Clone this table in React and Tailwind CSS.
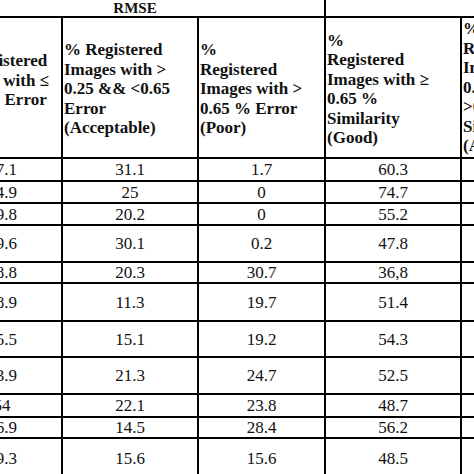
import React from "react";

const rows = [
  ["67.1", "31.1", "1.7", "60.3"],
  ["74.9", "25", "0", "74.7"],
  ["79.8", "20.2", "0", "55.2"],
  ["69.6", "30.1", "0.2", "47.8"],
  ["48.8", "20.3", "30.7", "36,8"],
  ["68.9", "11.3", "19.7", "51.4"],
  ["65.5", "15.1", "19.2", "54.3"],
  ["53.9", "21.3", "24.7", "52.5"],
  ["54", "22.1", "23.8", "48.7"],
  ["56.9", "14.5", "28.4", "56.2"],
  ["69.3", "15.6", "15.6", "48.5"],
];

const Head = ({ lines, className = "" }) => (
  <div className={"bg-white flex items-center pl-px " + className}>
    <div className="font-bold text-[17px] leading-[19.5px] whitespace-nowrap">
      {lines.map((l, i) => (
        <div key={i}>{l}</div>
      ))}
    </div>
  </div>
);

export default function App() {
  return (
    <div
      className="w-[474px] h-[474px] overflow-hidden bg-white text-[#111]"
      style={{ fontFamily: '"Liberation Serif", "Times New Roman", serif' }}
    >
      <div className="grid w-max grid-cols-[61px_134px_125px_134px_140px] grid-rows-[16px_139px_21px_20px_20px_35px_19px_36px_34px_35px_21px_19px_38px] gap-[2px] bg-black">
        {/* group header row */}
        <div className="col-span-3 bg-white flex items-center justify-center pr-[54px] font-bold text-[15px] leading-none">
          RMSE
        </div>
        <div className="col-span-2 bg-white" />

        {/* column headers */}
        <div className="bg-white flex items-center justify-end pb-[14px]">
          <div className="w-[126px] shrink-0 text-center font-bold text-[17px] leading-[19.5px] whitespace-nowrap">
            <div>% Registered</div>
            <div>Images with ≤</div>
            <div>0.25 % Error</div>
          </div>
        </div>
        <Head className="pt-[3px]" lines={["% Registered", "Images with >", "0.25 && <0.65", "Error", "(Acceptable)"]} />
        <Head className="pt-[3px]" lines={["%", "Registered", "Images with >", "0.65 % Error", "(Poor)"]} />
        <Head className="pt-[3px]" lines={["%", "Registered", "Images with ≥", "0.65 %", "Similarity", "(Good)"]} />
        <Head
          lines={["%", "Registered", "Images with ≥", "0.25 &&", ">0.65 %", "Similarity", "(Acceptable)"]}
        />

        {/* data rows */}
        {rows.map((r, i) => (
          <React.Fragment key={i}>
            <div className="bg-white flex items-center justify-end">
              <div className="w-[118px] shrink-0 text-center text-[17px] leading-none">{r[0]}</div>
            </div>
            <div className="bg-white flex items-center justify-center text-[17px] leading-none">{r[1]}</div>
            <div className="bg-white flex items-center justify-center text-[17px] leading-none">{r[2]}</div>
            <div className="bg-white flex items-center justify-center text-[17px] leading-none">{r[3]}</div>
            <div className="bg-white" />
          </React.Fragment>
        ))}
      </div>
    </div>
  );
}
